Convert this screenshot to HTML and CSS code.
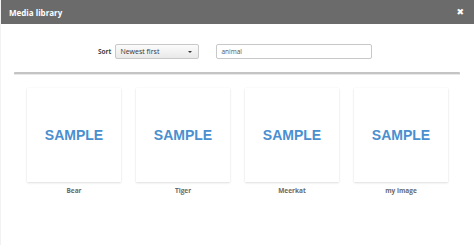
FILE: index.html
```html
<!DOCTYPE html>
<html>
<head>
<meta charset="utf-8">
<link rel="stylesheet" href="styles.css">
</head>
<body>
<div class="dialog">
  <div class="titlebar">
    <span class="title">Media library</span>
    <span class="close">&#10006;</span>
  </div>
  <div class="content">
    <div class="filters">
      <label class="sort-label">Sort</label>
      <div class="select"><span>Newest first</span><span class="caret"></span></div>
      <div class="search">animal</div>
    </div>
    <div class="divider"></div>
    <div class="grid">
      <div class="item"><div class="thumb">SAMPLE</div><div class="name">Bear</div></div>
      <div class="item"><div class="thumb">SAMPLE</div><div class="name">Tiger</div></div>
      <div class="item"><div class="thumb">SAMPLE</div><div class="name">Meerkat</div></div>
      <div class="item"><div class="thumb">SAMPLE</div><div class="name">my image</div></div>
    </div>
  </div>
</div>
</body>
</html>
```

FILE: styles.css
```css
html, body {
  margin: 0;
  padding: 0;
  background: #fff;
}
.dialog {
  width: 474px;
  height: 245px;
  box-sizing: border-box;
  border-left: 1px solid #f2f2f2;
  font-family: "Open Sans", "DejaVu Sans", sans-serif;
}
.titlebar {
  height: 24px;
  background: #6b6b6b;
  display: flex;
  align-items: center;
  justify-content: space-between;
  padding: 0 10px 0 8px;
  color: #fff;
}
.title {
  font-size: 8px;
  font-weight: 700;
}
.close {
  font-size: 9px;
  font-weight: 700;
  font-family: "DejaVu Sans", sans-serif;
}
.content {
  padding: 20px 14px 0 13px;
}
.filters {
  display: flex;
  align-items: center;
  height: 15px;
  padding-left: 84px;
}
.sort-label {
  font-size: 6.5px;
  font-weight: 700;
  color: #444;
  margin-right: 4px;
}
.select {
  width: 84px;
  height: 15px;
  box-sizing: border-box;
  border: 1px solid #c8c8c8;
  border-radius: 2px;
  background: linear-gradient(#fbfbfb, #e9e9e9);
  display: flex;
  align-items: center;
  justify-content: space-between;
  padding: 0 6px 0 4px;
  font-size: 7px;
  color: #333;
}
.caret {
  width: 0;
  height: 0;
  border-left: 2px solid transparent;
  border-right: 2px solid transparent;
  border-top: 2.5px solid #333;
}
.search {
  margin-left: 17px;
  width: 156px;
  height: 15px;
  box-sizing: border-box;
  border: 1px solid #c8c8c8;
  border-radius: 2px;
  padding-left: 4px;
  display: flex;
  align-items: center;
  font-size: 6.5px;
  color: #555;
}
.divider {
  margin-top: 13px;
  height: 2px;
  background: #c4c4c4;
  border-bottom: 1px solid #e8e8e8;
  border-radius: 1px;
}
.grid {
  display: flex;
  gap: 15px;
  padding-left: 13px;
  margin-top: 13px;
}
.item {
  width: 94px;
  display: flex;
  flex-direction: column;
  align-items: center;
}
.thumb {
  width: 94px;
  height: 94px;
  background: #fff;
  box-shadow: 0 1px 2px rgba(0,0,0,0.12), 0 0 1px rgba(0,0,0,0.06);
  display: flex;
  align-items: center;
  justify-content: center;
  font-family: "Liberation Sans", Arial, sans-serif;
  font-weight: 700;
  font-size: 14px;
  color: #4a8fcf;
}
.name {
  margin-top: 4px;
  font-size: 6.5px;
  font-weight: 700;
  color: #6a6a6a;
  -webkit-font-smoothing: antialiased;
}
```
